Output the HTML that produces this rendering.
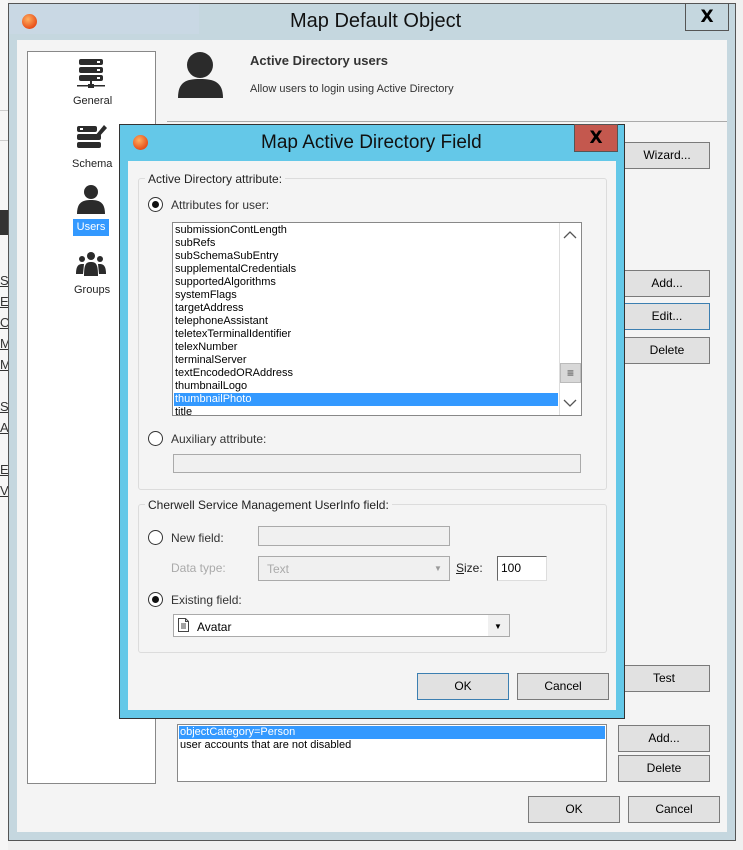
<!DOCTYPE html>
<html><head><meta charset="utf-8"><style>
*{box-sizing:border-box;margin:0;padding:0}
body{width:743px;height:850px;position:relative;overflow:hidden;background:#f0f0f0;font-family:"Liberation Sans",sans-serif;font-size:12px;color:#000}
.a{position:absolute}
.btn{position:absolute;background:#e1e1e1;border:1px solid #7a7a7a;text-align:center;font-size:12px;line-height:24px}
.t{position:absolute;white-space:nowrap}
.radio{position:absolute;width:15px;height:15px;border:1px solid #333;border-radius:50%;background:#fff}
.radio.on::after{content:"";position:absolute;left:3px;top:3px;width:7px;height:7px;border-radius:50%;background:#111}
.grp{position:absolute;border:1px solid #dcdcdc;border-radius:3px}
.gl{position:absolute;background:#f4f4f4;padding:0 3px;color:#222;font-size:12px}
.x{position:absolute;text-align:center;font-family:"DejaVu Sans",sans-serif;font-weight:bold;font-size:17px}
</style></head><body>
<div class="a" style="left:0;top:0;width:8px;height:850px;background:#f6f6f6"></div>
<div class="a" style="left:0;top:110px;width:8px;height:1px;background:#ccc"></div>
<div class="a" style="left:0;top:140px;width:8px;height:1px;background:#ccc"></div>
<div class="a" style="left:0;top:210px;width:8px;height:25px;background:#333"></div>
<div class="t" style="left:0;top:270px;font-size:13px;line-height:21px;color:#333;text-decoration:underline">S<br>E<br>O<br>M<br>M<br><br>S<br>A<br><br>E<br>V</div>

<div class="a" style="left:8px;top:3px;width:728px;height:838px;background:#c5d7df;border:1px solid #555"></div>
<div class="a" style="left:9px;top:4px;width:190px;height:30px;background:#c9d8e4"></div>
<div class="a" style="left:22px;top:14px;width:15px;height:15px;border-radius:50%;background:radial-gradient(circle at 40% 35%,#ffb060,#e8501a 70%)"></div>
<div class="t" style="left:290px;top:10px;font-size:20px;color:#111">Map Default Object</div>
<div class="a x" style="left:685px;top:3px;width:44px;height:28px;border:1px solid #555;line-height:26px">X</div>
<div class="a" style="left:17px;top:40px;width:710px;height:792px;background:#f4f4f4"></div>
<div class="a" style="left:27px;top:51px;width:129px;height:733px;background:#fff;border:1px solid #888"></div>
<svg class="a" style="left:77px;top:59px" width="28" height="30" viewBox="0 0 28 30"><g fill="#2b2b2b"><rect x="2" y="0" width="24" height="6" rx="2"/><rect x="2" y="8" width="24" height="6" rx="2"/><rect x="2" y="16" width="24" height="6" rx="2"/><rect x="13" y="22" width="2" height="5"/><rect x="0" y="26" width="28" height="1.5"/><rect x="11" y="25" width="6" height="4"/></g><g fill="#fff"><rect x="20" y="2" width="3" height="2"/><rect x="20" y="10" width="3" height="2"/><rect x="20" y="18" width="3" height="2"/></g></svg>
<div class="t" style="left:73px;top:95px;font-size:11px;color:#222">General</div>
<svg class="a" style="left:77px;top:122px" width="30" height="30" viewBox="0 0 30 30"><g fill="#2b2b2b"><rect x="0" y="4" width="20" height="6" rx="2"/><rect x="0" y="12" width="24" height="6" rx="2"/><rect x="0" y="20" width="24" height="6" rx="2"/><path d="M18 14 L27 3 L30 6 L21 16 L17 17Z"/></g><rect x="3" y="6" width="3" height="2" fill="#fff"/></svg>
<div class="t" style="left:72px;top:158px;font-size:11px;color:#222">Schema</div>
<svg class="a" style="left:77px;top:184px" width="28" height="30" viewBox="0 0 28 30"><g fill="#2b2b2b"><circle cx="14" cy="8" r="7"/><path d="M0 30 C0 18 6 16 14 16 C22 16 28 18 28 30Z"/></g></svg>
<div class="a" style="left:73px;top:219px;width:36px;height:17px;background:#3399ff;color:#fff;font-size:11px;text-align:center;line-height:17px">Users</div>
<svg class="a" style="left:76px;top:252px" width="30" height="24" viewBox="0 0 30 24"><g fill="#2b2b2b"><circle cx="15" cy="4" r="4"/><circle cx="6" cy="7" r="3"/><circle cx="24" cy="7" r="3"/><path d="M8 24 C8 12 10 10 15 10 C20 10 22 12 22 24Z"/><path d="M0 22 C0 13 3 12 7 12 L8 12 L7 22Z"/><path d="M30 22 C30 13 27 12 23 12 L22 12 L23 22Z"/></g></svg>
<div class="t" style="left:74px;top:284px;font-size:11px;color:#222">Groups</div>
<svg class="a" style="left:178px;top:52px" width="45" height="46" viewBox="0 0 45 46"><g fill="#2b2b2b"><circle cx="22" cy="13" r="13"/><path d="M0 46 C0 30 8 27 22 27 C36 27 45 30 45 46Z"/></g></svg>
<div class="t" style="left:250px;top:53px;font-size:13px;font-weight:bold;color:#333">Active Directory users</div>
<div class="t" style="left:250px;top:83px;font-size:11px;color:#333">Allow users to login using Active Directory</div>
<div class="a" style="left:167px;top:121px;width:560px;height:1px;background:#aaa"></div>
<div class="btn" style="left:624px;top:142px;width:86px;height:27px">Wizard...</div>
<div class="btn" style="left:624px;top:270px;width:86px;height:27px">Add...</div>
<div class="btn" style="left:624px;top:303px;width:86px;height:27px;border-color:#3c7fb1">Edit...</div>
<div class="btn" style="left:624px;top:337px;width:86px;height:27px">Delete</div>
<div class="btn" style="left:618px;top:665px;width:92px;height:27px">Test</div>
<div class="a" style="left:177px;top:724px;width:430px;height:58px;background:#fff;border:1px solid #888"></div>
<div class="a" style="left:179px;top:726px;width:426px;height:13px;background:#3399ff"></div>
<div class="t" style="left:180px;top:726px;font-size:11px;color:#fff;line-height:13px">objectCategory=Person</div>
<div class="t" style="left:180px;top:739px;font-size:11px;line-height:13px">user accounts that are not disabled</div>
<div class="btn" style="left:618px;top:725px;width:92px;height:27px">Add...</div>
<div class="btn" style="left:618px;top:755px;width:92px;height:27px">Delete</div>
<div class="btn" style="left:528px;top:796px;width:92px;height:27px">OK</div>
<div class="btn" style="left:628px;top:796px;width:92px;height:27px">Cancel</div>

<div class="a" style="left:119px;top:124px;width:506px;height:595px;background:#64c8e8;border:1px solid #333"></div>
<div class="a" style="left:133px;top:135px;width:15px;height:15px;border-radius:50%;background:radial-gradient(circle at 40% 35%,#ffb060,#e8501a 70%)"></div>
<div class="t" style="left:261px;top:132px;font-size:19px;color:#111">Map Active Directory Field</div>
<div class="a x" style="left:574px;top:124px;width:44px;height:28px;background:#c4584e;border:1px solid #555;line-height:26px">X</div>
<div class="a" style="left:128px;top:161px;width:488px;height:549px;background:#f4f4f4"></div>

<div class="grp" style="left:138px;top:178px;width:469px;height:312px"></div>
<div class="gl" style="left:145px;top:172px">Active Directory attribute:</div>
<div class="radio on" style="left:148px;top:197px"></div>
<div class="t" style="left:171px;top:198px;color:#333">Attributes for user:</div>
<div class="a" style="left:172px;top:222px;width:410px;height:194px;background:#fff;border:1px solid #888;overflow:hidden">
<div style="position:absolute;left:2px;top:1px;font-size:11px;line-height:13px">submissionContLength<br>subRefs<br>subSchemaSubEntry<br>supplementalCredentials<br>supportedAlgorithms<br>systemFlags<br>targetAddress<br>telephoneAssistant<br>teletexTerminalIdentifier<br>telexNumber<br>terminalServer<br>textEncodedORAddress<br>thumbnailLogo<br><span style="display:block;width:384px;margin-left:-1px;padding-left:1px;background:#3399ff;color:#fff">thumbnailPhoto</span>title</div>
<div style="position:absolute;left:386px;top:0;width:23px;height:192px;background:#fff;border-left:1px solid #ddd"></div>
<svg style="position:absolute;left:390px;top:8px" width="14" height="8"><path d="M1 7L7 1L13 7" fill="none" stroke="#555" stroke-width="1.3"/></svg>
<div style="position:absolute;left:387px;top:140px;width:21px;height:20px;background:#d8d8d8;border:1px solid #bbb;text-align:center;line-height:18px;color:#444">&#x2261;</div>
<svg style="position:absolute;left:390px;top:176px" width="14" height="8"><path d="M1 1L7 7L13 1" fill="none" stroke="#555" stroke-width="1.3"/></svg>
</div>
<div class="radio" style="left:148px;top:431px"></div>
<div class="t" style="left:171px;top:432px;color:#333">Auxiliary attribute:</div>
<div class="a" style="left:173px;top:454px;width:408px;height:19px;background:#f0f0f0;border:1px solid #aaa"></div>

<div class="grp" style="left:138px;top:504px;width:469px;height:149px"></div>
<div class="gl" style="left:145px;top:498px">Cherwell Service Management UserInfo field:</div>
<div class="radio" style="left:148px;top:530px"></div>
<div class="t" style="left:171px;top:531px;color:#333">New field:</div>
<div class="a" style="left:258px;top:526px;width:192px;height:20px;background:#f0f0f0;border:1px solid #aaa"></div>
<div class="t" style="left:171px;top:561px;color:#aaa">Data type:</div>
<div class="a" style="left:258px;top:556px;width:192px;height:25px;background:#f0f0f0;border:1px solid #aaa"></div>
<div class="t" style="left:267px;top:562px;color:#aaa">Text</div>
<div class="t" style="left:434px;top:564px;color:#999;font-size:8px">&#9660;</div>
<div class="t" style="left:456px;top:561px;color:#222"><u>S</u>ize:</div>
<div class="a" style="left:497px;top:556px;width:50px;height:25px;background:#fff;border:1px solid #666;border-right-color:#ddd;border-bottom-color:#ddd"></div>
<div class="t" style="left:501px;top:561px">100</div>
<div class="radio on" style="left:148px;top:592px"></div>
<div class="t" style="left:171px;top:593px;color:#333">Existing field:</div>
<div class="a" style="left:173px;top:614px;width:337px;height:23px;background:#fff;border:1px solid #aaa"></div>
<div class="a" style="left:488px;top:615px;width:21px;height:21px;background:#f0f0f0"></div>
<div class="t" style="left:494px;top:622px;font-size:8px">&#9660;</div>
<svg class="a" style="left:178px;top:618px" width="11" height="14" viewBox="0 0 11 14"><path d="M.5 .5H7.5L10.5 3.5V13.5H.5Z M7.5 .5V3.5H10.5 M3 6H8 M3 8H8 M3 10H8" fill="#fff" stroke="#444"/></svg>
<div class="t" style="left:197px;top:620px">Avatar</div>
<div class="btn" style="left:417px;top:673px;width:92px;height:27px;border-color:#3c7fb1">OK</div>
<div class="btn" style="left:517px;top:673px;width:92px;height:27px">Cancel</div>
</body></html>
